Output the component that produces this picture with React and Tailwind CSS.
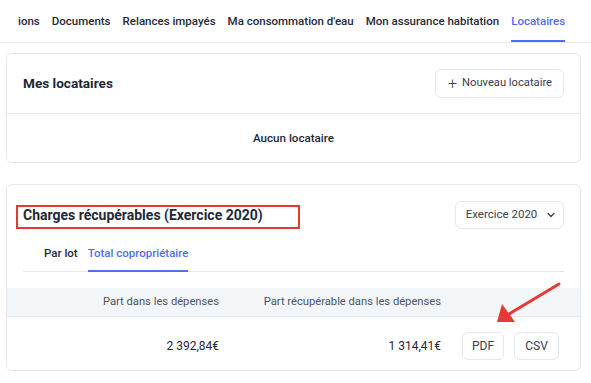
import { ChevronDown } from 'lucide-react';

const navItems = ['ions', 'Documents', 'Relances impayés', "Ma consommation d'eau", 'Mon assurance habitation'];

export default function App() {
  return (
    <div className="relative h-[383px] w-[591px] overflow-hidden bg-white font-[Roboto,'Liberation_Sans',sans-serif] text-[#1f2937]">
      {/* Onglets */}
      <nav className="flex h-[43px] items-stretch gap-3 border-b border-[#e5eaf0] pl-[18px]">
        {navItems.map((item) => (
          <span key={item} className="flex items-center pt-px text-[11.5px] font-medium whitespace-nowrap">
            {item}
          </span>
        ))}
        <span className="flex items-center border-b-2 border-[#4f6ef7] pt-[3px] text-[11.5px] font-medium whitespace-nowrap text-[#4f6ef7]">
          Locataires
        </span>
      </nav>

      {/* Mes locataires */}
      <section className="mx-[6px] mt-[10px] w-[575px] rounded-md border border-[#e2e8f0]">
        <div className="flex items-center justify-between border-b border-[#e2e8f0] px-4 py-[15px]">
          <h2 className="text-[13.6px] font-bold">Mes locataires</h2>
          <button className="flex h-[29px] items-center gap-[5px] rounded-md border border-[#e2e8f0] pr-[11px] pl-[12px] text-[11.2px] text-[#374151]">
            <span className="text-[16px] leading-none font-light">+</span>
            Nouveau locataire
          </button>
        </div>
        <div className="py-4 text-center text-[11.6px] leading-4 font-medium">Aucun locataire</div>
      </section>

      {/* Charges récupérables */}
      <section className="mx-[6px] mt-[21px] w-[575px] rounded-md border border-[#e2e8f0]">
        <div className="px-4 pt-4 pb-4">
          <div className="flex items-center justify-between">
            <h2 className="text-[14px] font-bold">Charges récupérables (Exercice 2020)</h2>
            <button className="flex h-[28px] w-[109px] items-center justify-center gap-2 rounded-md border border-[#e2e8f0] pl-1 text-[11.5px] whitespace-nowrap text-[#374151]">
              Exercice 2020
              <ChevronDown className="h-3 w-3" strokeWidth={2.5} />
            </button>
          </div>
          <div className="mt-2 flex gap-[10px] border-b border-[#e2e8f0] pl-[21px]">
            <span className="pt-2 pb-[9px] text-[11.5px] leading-4 font-medium">Par lot</span>
            <span className="-mb-px border-b-2 border-[#4f6ef7] pt-2 pb-[9px] text-[11.5px] leading-4 font-medium text-[#4f6ef7]">
              Total copropriétaire
            </span>
          </div>
        </div>

        <div className="flex h-[29px] items-center border-b border-[#e2e8f0] bg-[#f3f6f9] text-[11.2px] text-[#4b5563]">
          <div className="w-[212px] text-right">Part dans les dépenses</div>
          <div className="w-[222px] text-right">Part récupérable dans les dépenses</div>
        </div>
        <div className="flex items-center pt-[15px] pb-[10px] text-[12px]">
          <div className="w-[212px] text-right">2 392,84€</div>
          <div className="w-[222px] text-right">1 314,41€</div>
          <div className="ml-[21px] flex gap-[10px]">
            <button className="h-[28px] w-[42px] rounded-md border border-[#e2e8f0] text-[12px] text-[#374151]">PDF</button>
            <button className="h-[28px] w-[45px] rounded-md border border-[#e2e8f0] text-[12px] text-[#374151]">CSV</button>
          </div>
        </div>
      </section>

      {/* Annotations */}
      <div className="pointer-events-none absolute top-[205px] left-[16px] h-[24px] w-[284px] border-2 border-[#e53935]" />
      <svg className="pointer-events-none absolute top-0 left-0" width="591" height="383">
        <line x1="559" y1="284" x2="509" y2="314" stroke="#e53935" strokeWidth="3" strokeLinecap="round" />
        <polygon points="497,322 502,304 515,322" fill="#e53935" />
      </svg>
    </div>
  );
}
